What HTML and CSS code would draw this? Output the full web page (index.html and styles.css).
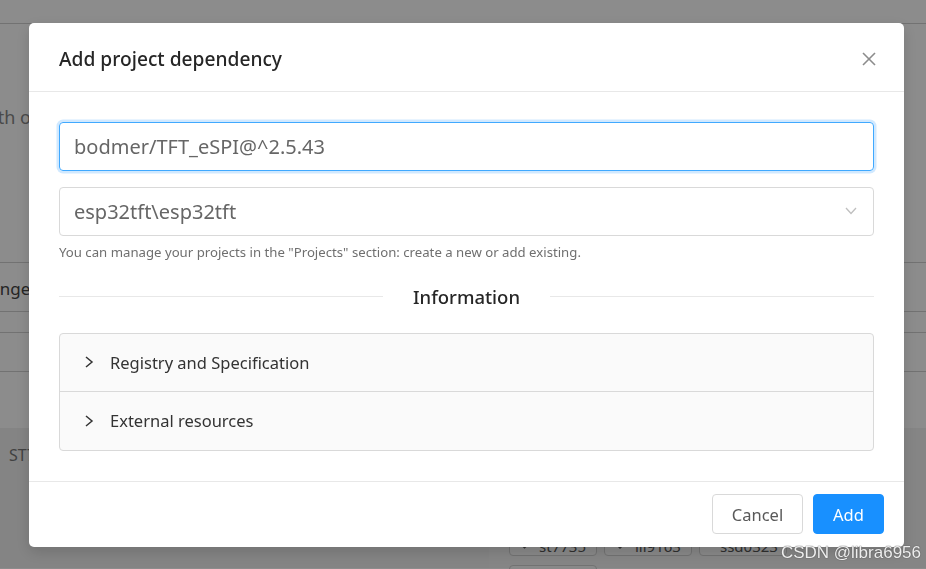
FILE: index.html
```html
<!DOCTYPE html>
<html lang="en">
<head>
<meta charset="utf-8">
<title>Add project dependency</title>
<link rel="stylesheet" href="styles.css">
</head>
<body>
<div class="page">
  <div class="topbar"><span class="topbar-text">es</span></div>
  <p class="intro">with other packages and frameworks</p>
  <div class="table">
    <div class="row row-tall"><span class="cell-text">Changelog</span></div>
    <div class="row row-short"></div>
    <div class="row row-mid"></div>
    <div class="row row-open"></div>
  </div>
  <div class="lower">
    <div class="lower-left"><span class="lower-label">ST7735</span></div>
    <div class="lower-right">
      <div class="tags">
        <span class="tag"><svg class="tag-icon" viewBox="0 0 12 8"><polyline points="1,1 6,6 11,1"/></svg>st7735</span>
        <span class="tag"><svg class="tag-icon" viewBox="0 0 12 8"><polyline points="1,1 6,6 11,1"/></svg>ili9163</span>
        <span class="tag"><svg class="tag-icon" viewBox="0 0 12 8"><polyline points="1,1 6,6 11,1"/></svg>ssd0323</span>
      </div>
      <div class="tags">
        <span class="tag"><svg class="tag-icon" viewBox="0 0 12 8"><polyline points="1,1 6,6 11,1"/></svg>s6d02a1</span>
      </div>
    </div>
  </div>
</div>

<div class="mask"></div>

<div class="modal-wrap">
  <div class="modal">
    <div class="modal-header">
      <div class="modal-title">Add project dependency</div>
      <svg class="close" viewBox="0 0 14 14"><line x1="1" y1="1" x2="13" y2="13"/><line x1="13" y1="1" x2="1" y2="13"/></svg>
    </div>
    <div class="modal-body">
      <div class="input">bodmer/TFT_eSPI@^2.5.43</div>
      <div class="select">
        <span>esp32tft\esp32tft</span>
        <svg class="select-arrow" viewBox="0 0 12 8"><polyline points="1,1 6,6.5 11,1"/></svg>
      </div>
      <div class="help">You can manage your projects in the "Projects" section: create a new or add existing.</div>
      <div class="divider"><span class="divider-line"></span><span class="divider-text">Information</span><span class="divider-line"></span></div>
      <div class="collapse">
        <div class="collapse-item">
          <svg class="collapse-arrow" viewBox="0 0 10 12"><polyline points="2,1 8,6 2,11"/></svg>
          <span>Registry and Specification</span>
        </div>
        <div class="collapse-item">
          <svg class="collapse-arrow" viewBox="0 0 10 12"><polyline points="2,1 8,6 2,11"/></svg>
          <span>External resources</span>
        </div>
      </div>
    </div>
    <div class="modal-footer">
      <button class="btn btn-default">Cancel</button>
      <button class="btn btn-primary">Add</button>
    </div>
  </div>
</div>

<div class="watermark">CSDN @libra6956</div>
</body>
</html>
```
FILE: styles.css
```css
* { box-sizing: border-box; }
html, body { margin: 0; padding: 0; }
body {
  width: 926px;
  height: 569px;
  overflow: hidden;
  font-family: "Noto Sans", "Open Sans", sans-serif;
  background: #ffffff;
  color: #262626;
}

/* underlying page */
.page { width: 926px; height: 569px; overflow: hidden; background: #fff; }
.topbar {
  height: 24px;
  border-bottom: 1px solid #d0d0d0;
  overflow: hidden;
}
.topbar-text {
  display: block;
  margin-top: -19px;
  margin-left: 2px;
  font-size: 18px;
  font-weight: 700;
  color: #333;
}
.intro {
  margin: 0;
  padding-top: 81px;
  margin-left: -21px;
  font-size: 18px;
  line-height: 24px;
  color: #888;
  white-space: nowrap;
  height: 238px;
}
.table { border-top: 1px solid #d0d0d0; }
.row { border-bottom: 1px solid #d0d0d0; display: flex; align-items: center; }
.row-tall { height: 49px; }
.row-short { height: 21px; }
.row-mid { height: 39px; }
.row-open { height: 56px; border-bottom: 0; }
.cell-text {
  margin-left: -31px;
  padding-top: 3px;
  font-size: 17px;
  color: #444;
  white-space: nowrap;
}
.lower { display: flex; height: 140px; }
.lower-left {
  width: 489px;
  background: #f0f0f0;
  padding: 16px 9px;
}
.lower-label { font-size: 16px; color: #777; }
.lower-right {
  flex: 1;
  background: #f3f3f3;
  padding: 108px 0 0 20px;
}
.tags { display: flex; gap: 7px; margin-bottom: 9px; }
.tag {
  display: inline-flex;
  align-items: center;
  gap: 10px;
  height: 20px;
  width: 88px;
  padding: 0 10px;
  border: 1px solid #cfcfcf;
  border-radius: 4px;
  font-size: 15px;
  color: #555;
  background: #fafafa;
}
.tag-icon { width: 10px; height: 7px; fill: none; stroke: #555; stroke-width: 1.5; }

.mask {
  position: fixed;
  inset: 0;
  background: rgba(0, 0, 0, 0.45);
}

/* modal */
.modal-wrap { position: fixed; inset: 0; }
.modal {
  margin: 23px 0 0 29px;
  width: 875px;
  background: #fff;
  border-radius: 5px;
  box-shadow: 0 5px 15px rgba(0, 0, 0, 0.15);
}
.modal-header {
  display: flex;
  align-items: center;
  justify-content: space-between;
  padding: 22px 28px 18px 30px;
  border-bottom: 1px solid #e8e8e8;
}
.modal-title {
  font-size: 19.2px;
  line-height: 27.5px;
  font-weight: 500;
  color: #262626;
}
.close {
  width: 14px;
  height: 14px;
  fill: none;
  stroke: #8c8c8c;
  stroke-width: 1.6;
  margin-top: 1px;
}
.modal-body { padding: 30px 30px 30px; }
.input {
  height: 49px;
  display: flex;
  align-items: center;
  padding: 0 14px;
  border: 1px solid #40a9ff;
  border-radius: 4px;
  box-shadow: 0 0 0 2.5px rgba(24, 144, 255, 0.2);
  font-size: 20px;
  color: #666;
}
.select {
  margin-top: 16px;
  height: 49px;
  display: flex;
  align-items: center;
  justify-content: space-between;
  padding: 0 16px 0 14px;
  border: 1px solid #d9d9d9;
  border-radius: 4px;
  font-size: 20px;
  color: #666;
}
.select-arrow {
  width: 12px;
  height: 8px;
  fill: none;
  stroke: #bfbfbf;
  stroke-width: 1.3;
}
.help {
  margin-top: 5px;
  font-size: 13.2px;
  line-height: 22px;
  color: #6f6f6f;
}
.divider {
  display: flex;
  align-items: center;
  margin: 20px 0 22px;
  height: 28px;
}
.divider-line { flex: 1; border-top: 1px solid #e8e8e8; }
.divider-text {
  padding: 0 30px;
  font-size: 18.5px;
  font-weight: 500;
  color: #262626;
}
.collapse {
  border: 1px solid #d9d9d9;
  border-radius: 4px;
  background: #fafafa;
}
.collapse-item {
  display: flex;
  align-items: center;
  gap: 16px;
  padding: 15px 20px 15px 24px;
  line-height: 27.5px;
  font-size: 16.5px;
  color: #333;
}
.collapse-item + .collapse-item { border-top: 1px solid #d9d9d9; }
.collapse-arrow {
  width: 10px;
  height: 12px;
  fill: none;
  stroke: #333;
  stroke-width: 1.5;
}
.modal-footer {
  display: flex;
  justify-content: flex-end;
  gap: 10px;
  padding: 12.5px 20px;
  border-top: 1px solid #e8e8e8;
}
.btn {
  height: 40px;
  border-radius: 4px;
  font-family: inherit;
  font-size: 16.5px;
  padding: 0;
  cursor: pointer;
}
.btn-default {
  width: 91px;
  background: #fff;
  border: 1px solid #d9d9d9;
  color: #595959;
}
.btn-primary {
  width: 71px;
  background: #1890ff;
  border: 1px solid #1890ff;
  color: #fff;
}

.watermark {
  position: fixed;
  right: 5px;
  bottom: 6px;
  font-family: "Liberation Sans", Arial, sans-serif;
  font-size: 17px;
  line-height: 20px;
  color: rgba(255, 255, 255, 0.9);
  text-shadow: 0 0 1px #555, 0 0 1px #555;
}
```
